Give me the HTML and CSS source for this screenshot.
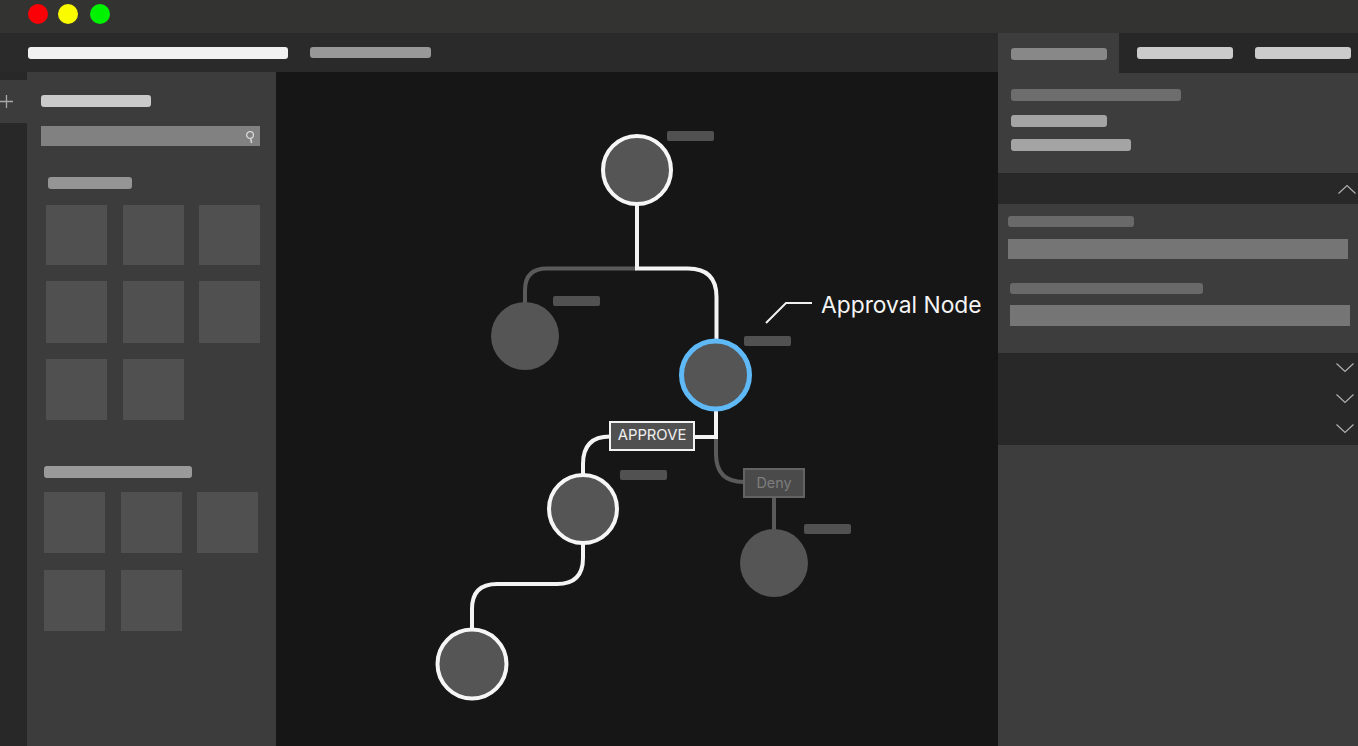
FILE: index.html
```html
<!DOCTYPE html>
<html lang="en">
<head>
    <meta charset="UTF-8">
    <meta name="viewport" content="width=device-width, initial-scale=1.0">
    <title>Workflow editor</title>
    <link rel="stylesheet" href="styles.css">
</head>
<body>
    <div class="titlebar">
        <span class="light light-red"></span>
        <span class="light light-yellow"></span>
        <span class="light light-green"></span>
    </div>

    <div class="main">
        <div class="editor">
            <div class="toolbar">
                <div class="bar bar-title"></div>
                <div class="bar bar-subtitle"></div>
            </div>

            <div class="workspace">
                <div class="rail">
                    <div class="rail-tab">
                        <svg class="plus" width="13" height="13" viewBox="0 0 13 13">
                            <path d="M6.500 0V13M0 6.500H13" stroke="#a8a8a8" stroke-width="1.300" fill="none"/>
                        </svg>
                    </div>
                </div>

                <div class="sidebar">
                    <div class="bar side-heading"></div>
                    <div class="search">
                        <svg width="10" height="14" viewBox="0 0 10 14">
                            <circle cx="5" cy="5" r="3.400" stroke="#d8d8d8" stroke-width="1.300" fill="none"/>
                            <path d="M5.600 8.400L6.600 13" stroke="#d8d8d8" stroke-width="1.500" fill="none"/>
                        </svg>
                    </div>

                    <div class="bar group-one-label"></div>
                    <div class="tile-grid group-one">
                        <div class="tile"></div>
                        <div class="tile"></div>
                        <div class="tile"></div>
                        <div class="tile"></div>
                        <div class="tile"></div>
                        <div class="tile"></div>
                        <div class="tile"></div>
                        <div class="tile"></div>
                    </div>

                    <div class="bar group-two-label"></div>
                    <div class="tile-grid group-two">
                        <div class="tile"></div>
                        <div class="tile"></div>
                        <div class="tile"></div>
                        <div class="tile"></div>
                        <div class="tile"></div>
                    </div>
                </div>

                <div class="canvas">
                    <svg class="diagram" width="722" height="674" viewBox="276 72 722 674">
                        <!-- inactive branches -->
                        <g class="line line-off">
                            <path d="M637 268.500H547Q525 268.500 525 290V304"/>
                            <path d="M716 437V454Q716 482 744 482"/>
                            <path d="M774 497V532"/>
                        </g>

                        <!-- active path -->
                        <g class="line line-on">
                            <path d="M637 204V268.500H688Q716.500 268.500 716.500 297V340"/>
                            <path d="M716 410V437H694"/>
                            <path d="M610 436.500Q583 436.500 583 464V476"/>
                            <path d="M583 543V558Q583 584 557 584H497Q472 584 472 609V631"/>
                        </g>

                        <circle class="node node-on" cx="637" cy="170" r="34"/>
                        <circle class="node" cx="525" cy="336" r="34"/>
                        <circle class="node node-active" cx="715.500" cy="375" r="34"/>
                        <circle class="node node-on" cx="583" cy="509" r="34"/>
                        <circle class="node" cx="774" cy="563" r="34"/>
                        <circle class="node node-on" cx="472" cy="664" r="34.500"/>

                        <rect class="tag" x="667" y="131" width="47" height="10" rx="2"/>
                        <rect class="tag" x="553" y="296" width="47" height="10" rx="2"/>
                        <rect class="tag" x="744" y="336" width="47" height="10" rx="2"/>
                        <rect class="tag" x="620" y="470" width="47" height="10" rx="2"/>
                        <rect class="tag" x="804" y="524" width="47" height="10" rx="2"/>

                        <rect class="box-on" x="610" y="422" width="84" height="28"/>
                        <text class="box-text-on" x="652" y="440">APPROVE</text>

                        <rect class="box-off" x="744" y="469" width="60" height="28"/>
                        <text class="box-text-off" x="774" y="488">Deny</text>

                        <path class="callout" d="M766 323L786 303H812"/>
                        <text class="callout-text" x="821" y="312.500">Approval Node</text>
                    </svg>
                </div>
            </div>
        </div>

        <div class="panel">
            <div class="tabs">
                <div class="tab tab-active"><div class="bar bar-tab-active"></div></div>
                <div class="tab-rest">
                    <div class="bar bar-tab"></div>
                    <div class="bar bar-tab"></div>
                </div>
            </div>

            <div class="summary">
                <div class="bar summary-name"></div>
                <div class="bar summary-line-a"></div>
                <div class="bar summary-line-b"></div>
            </div>

            <div class="section-head">
                <svg width="20" height="10" viewBox="0 0 20 10">
                    <path d="M1.500 9.500L10 1.500L18.500 9.500" stroke="#b0b0b0" stroke-width="1.200" fill="none"/>
                </svg>
            </div>

            <div class="fields">
                <div class="bar field-label-a"></div>
                <div class="field-input field-input-a"></div>
                <div class="bar field-label-b"></div>
                <div class="field-input field-input-b"></div>
            </div>

            <div class="collapsed">
                <div class="collapsed-row">
                    <svg width="20" height="10" viewBox="0 0 20 10"><path d="M1.500 .5L10 8.500L18.500 .5" stroke="#b0b0b0" stroke-width="1.200" fill="none"/></svg>
                </div>
                <div class="collapsed-row">
                    <svg width="20" height="10" viewBox="0 0 20 10"><path d="M1.500 .5L10 8.500L18.500 .5" stroke="#b0b0b0" stroke-width="1.200" fill="none"/></svg>
                </div>
                <div class="collapsed-row">
                    <svg width="20" height="10" viewBox="0 0 20 10"><path d="M1.500 .5L10 8.500L18.500 .5" stroke="#b0b0b0" stroke-width="1.200" fill="none"/></svg>
                </div>
            </div>
        </div>
    </div>
</body>
</html>
```

FILE: styles.css
```css
* {
    margin: 0;
    padding: 0;
    box-sizing: border-box;
}

body {
    width: 1358px;
    height: 746px;
    overflow: hidden;
    background-color: #3d3d3d;
    font-family: Inter, "Liberation Sans", sans-serif;
}

.bar {
    height: 12px;
    border-radius: 3px;
}

/* title bar */
.titlebar {
    display: flex;
    height: 33px;
    padding: 4px 0 0 28px;
    background-color: #333331;
}

.light {
    width: 20px;
    height: 20px;
    border-radius: 50%;
}

.light-red {
    background-color: #fb0007;
}

.light-yellow {
    margin-left: 10px;
    background-color: #fbfb00;
}

.light-green {
    margin-left: 12px;
    background-color: #00f200;
}

.main {
    display: flex;
    height: 713px;
}

.editor {
    width: 998px;
}

.toolbar {
    display: flex;
    align-items: center;
    gap: 22px;
    height: 39px;
    padding-left: 28px;
    background-color: #2a2a2a;
}

.bar-title {
    width: 260px;
    background-color: #f1f1f1;
}

.bar-subtitle {
    width: 121px;
    height: 11px;
    background-color: #989898;
}

.workspace {
    display: flex;
    height: 674px;
}

/* left rail */
.rail {
    width: 27px;
    padding-top: 8px;
    background-color: #282828;
}

.rail-tab {
    display: flex;
    align-items: center;
    height: 43px;
    background-color: #3c3c3c;
}

.plus {
    display: block;
}

/* sidebar */
.sidebar {
    width: 249px;
    background-color: #3c3c3c;
}

.side-heading {
    width: 110px;
    margin: 23px 0 0 14px;
    background-color: #cacaca;
}

.search {
    display: flex;
    align-items: center;
    justify-content: flex-end;
    width: 219px;
    height: 20px;
    margin: 19px 0 0 14px;
    padding: 2px 5px 0 0;
    background-color: #818181;
}

.group-one-label {
    width: 84px;
    margin: 31px 0 0 21px;
    background-color: #959595;
}

.group-two-label {
    width: 148px;
    margin: 46px 0 0 17px;
    background-color: #9a9a9a;
}

.tile-grid {
    display: grid;
    grid-template-columns: repeat(3, 61px);
    column-gap: 15.500px;
}

.group-one {
    grid-template-rows: 60px 62px 61px;
    row-gap: 16px;
    margin: 16px 0 0 19px;
}

.group-two {
    grid-template-rows: 61px 61px;
    row-gap: 17px;
    margin: 14px 0 0 17px;
}

.tile {
    background-color: #505050;
}

/* canvas */
.canvas {
    width: 722px;
    background-color: #161616;
}

.diagram {
    display: block;
}

.line path {
    fill: none;
    stroke-width: 4;
}

.line-on path {
    stroke: #f4f4f4;
}

.line-off path {
    stroke: #5a5a5a;
}

.node {
    fill: #555;
}

.node-on {
    stroke: #f6f6f6;
    stroke-width: 4;
}

.node-active {
    stroke: #5fb9f6;
    stroke-width: 5;
}

.tag {
    fill: #515151;
}

.box-on {
    fill: #505050;
    stroke: #f4f4f4;
    stroke-width: 2;
}

.box-off {
    fill: #4a4a4a;
    stroke: #636363;
    stroke-width: 2;
}

.box-text-on,
.box-text-off {
    text-anchor: middle;
}

.box-text-on {
    fill: #f0f0f0;
    font-size: 14.800px;
}

.box-text-off {
    fill: #7d7d7d;
    font-size: 14.400px;
}

.callout {
    fill: none;
    stroke: #f0f0f0;
    stroke-width: 2;
}

.callout-text {
    fill: #f4f4f4;
    font-size: 22.800px;
}

/* right panel */
.panel {
    width: 360px;
    background-color: #3d3d3d;
}

.tabs {
    display: flex;
    height: 40px;
}

.tab {
    width: 121px;
    padding: 15px 0 0 13px;
}

.bar-tab-active {
    width: 96px;
    background-color: #888;
}

.tab-rest {
    display: flex;
    flex: 1;
    gap: 22px;
    padding: 14px 0 0 18px;
    background-color: #272727;
}

.bar-tab {
    width: 96px;
    background-color: #cbcbcb;
}

.summary {
    height: 100px;
    padding: 16px 0 0 13px;
}

.summary-name {
    width: 170px;
    background-color: #6d6d6d;
}

.summary-line-a {
    width: 96px;
    margin-top: 14px;
    background-color: #a4a4a4;
}

.summary-line-b {
    width: 120px;
    margin-top: 12px;
    background-color: #a4a4a4;
}

.section-head {
    display: flex;
    align-items: center;
    justify-content: flex-end;
    height: 31px;
    padding: 0 1px 0 0;
    background-color: #282828;
}

.fields {
    height: 149px;
    padding-top: 12px;
}

.field-label-a {
    width: 126px;
    height: 11px;
    margin-left: 10px;
    background-color: #696969;
}

.field-label-b {
    width: 193px;
    height: 11px;
    margin: 24px 0 0 12px;
    background-color: #696969;
}

.field-input {
    width: 340px;
    background-color: #757575;
}

.field-input-a {
    height: 20px;
    margin: 12px 0 0 10px;
}

.field-input-b {
    height: 21px;
    margin: 11px 0 0 12px;
}

.collapsed {
    height: 92px;
    background-color: #282828;
}

.collapsed-row {
    display: flex;
    align-items: center;
    justify-content: flex-end;
    height: 30.600px;
    padding-right: 3px;
}
```
